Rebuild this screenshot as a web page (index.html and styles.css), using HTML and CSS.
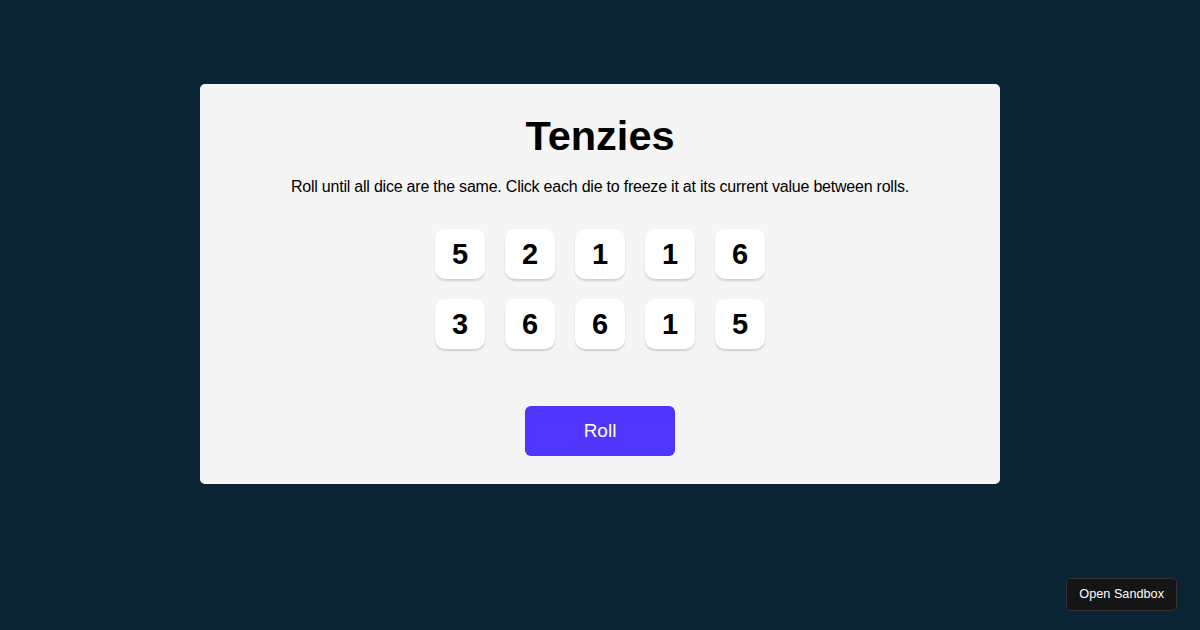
FILE: index.html
```html
<!DOCTYPE html>
<html lang="en">
  <head>
    <meta charset="UTF-8" />
    <title>Tenzies</title>
    <link rel="stylesheet" href="styles.css">
  </head>
  <body>
    <main class="board">
      <h1 class="title">Tenzies</h1>
      <p class="instructions">Roll until all dice are the same. Click each die to freeze it at its current value between rolls.</p>

      <!-- Dice grid -->
      <div class="dice">
        <button class="die">5</button>
        <button class="die">2</button>
        <button class="die">1</button>
        <button class="die">1</button>
        <button class="die">6</button>
        <button class="die">3</button>
        <button class="die">6</button>
        <button class="die">6</button>
        <button class="die">1</button>
        <button class="die">5</button>
      </div>

      <button class="roll">Roll</button>
    </main>

    <a class="sandbox-link">Open Sandbox</a>
  </body>
</html>
```

FILE: styles.css
```css
* {
  box-sizing: border-box;
}
body {
  margin: 0;
  height: 630px;
  background-color: #0b2434;
  font-family: "Liberation Sans", Arial, sans-serif;
  display: flex;
  justify-content: center;
  padding-top: 84px;
}
.board {
  width: 800px;
  height: 400px;
  background-color: #f5f5f5;
  border-radius: 5px;
  display: flex;
  flex-direction: column;
  align-items: center;
}
.title {
  margin: 28px 0 0;
  font-size: 41.5px;
  line-height: 48px;
  font-weight: bold;
  color: #000;
}
.instructions {
  margin: 16px 0 0;
  font-size: 16px;
  line-height: 22px;
  letter-spacing: -0.22px;
  color: #000;
}
.dice {
  display: grid;
  grid-template-columns: repeat(5, 50px);
  gap: 20px;
  margin-top: 31px;
}
.die {
  width: 50px;
  height: 50px;
  border: none;
  border-radius: 10px;
  background-color: #fff;
  box-shadow: 0 2px 2px rgba(0, 0, 0, 0.15);
  font-family: "Liberation Sans", Arial, sans-serif;
  font-size: 29px;
  font-weight: bold;
  color: #000;
  padding: 0;
}
.roll {
  margin-top: 57px;
  width: 150px;
  height: 50px;
  border: none;
  border-radius: 6px;
  background-color: #5035ff;
  color: #fff;
  font-family: "Liberation Sans", Arial, sans-serif;
  font-size: 19px;
}
.sandbox-link {
  position: fixed;
  right: 23px;
  bottom: 19px;
  padding: 0 12px;
  height: 33px;
  line-height: 31px;
  background-color: #151515;
  border: 1px solid #333;
  border-radius: 4px;
  color: #fff;
  font-size: 12.7px;
}
```
